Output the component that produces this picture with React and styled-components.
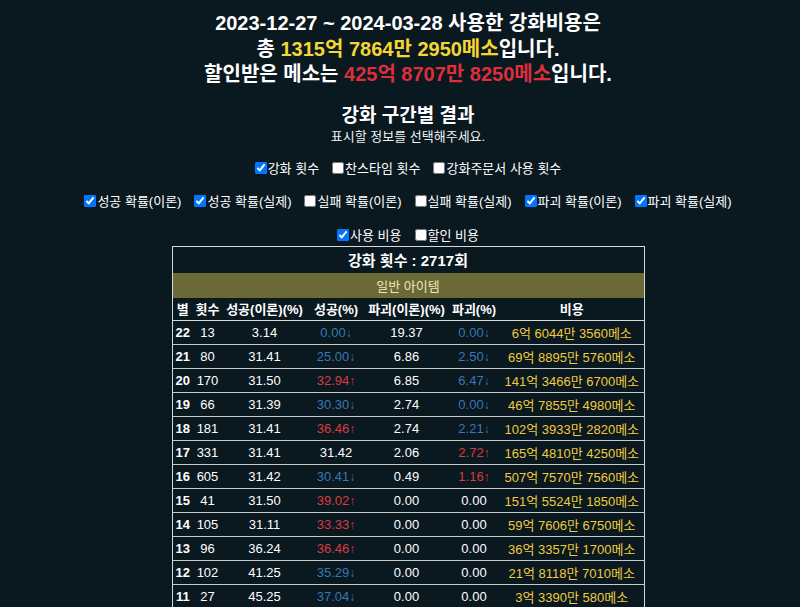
import React from "react";
import styled, { createGlobalStyle } from "styled-components";

const Global = createGlobalStyle`
  html, body { margin: 0; padding: 0; background: #0a1820; }
  body { font-family: "Liberation Sans", "Noto Sans CJK KR", sans-serif; color: #ffffff; }
`;

const Page = styled.div`
  padding: 11px 0 0 16px;
  display: flex;
  flex-direction: column;
  align-items: center;
`;

const Summary = styled.div`
  font-size: 20px;
  font-weight: bold;
  line-height: 25.5px;
  text-align: center;
`;

const Hl = styled.span`
  color: ${(p) => (p.$tone === "red" ? "#dc2f3a" : "#f3d633")};
`;

const Heading = styled.div`
  margin-top: 16px;
  font-size: 19px;
  font-weight: bold;
  line-height: 24px;
`;

const Sub = styled.div`
  font-size: 13px;
  line-height: 16px;
  color: #f2f2f2;
  margin-top: 1px;
`;

const OptionRow = styled.div`
  display: flex;
  gap: 13px;
  height: 20px;
  align-items: center;
  margin-top: ${(p) => p.$mt}px;
`;

const Option = styled.label`
  display: inline-flex;
  align-items: center;
  font-size: 13px;
  color: #ffffff;
  input {
    margin: 0 1px 0 0;
    width: 12px;
    height: 12px;
  }
`;

const Table = styled.table`
  margin-top: 1px;
  width: 473px;
  table-layout: fixed;
  border-collapse: collapse;
  border: 1px solid #d8d8d8;
  font-size: 13px;
`;

const TitleCell = styled.th`
  height: 26px;
  font-size: 15px;
  font-weight: bold;
  padding: 0;
  text-align: center;
`;

const GroupCell = styled.th`
  height: 25px;
  background: #6a6937;
  color: #efe7b8;
  font-size: 13px;
  font-weight: normal;
  padding: 0;
`;

const HeadRow = styled.tr`
  border-bottom: 1px solid #d8d8d8;
`;

const HeadCell = styled.th`
  height: 22px;
  font-size: 13px;
  font-weight: bold;
  padding: 0;
  text-align: center;
  white-space: nowrap;
`;

const Row = styled.tr`
  border-bottom: 1px solid #c8c8c8;
`;

const toneColor = {
  blue: "#3a76b4",
  red: "#db3a3e",
  gold: "#f0cb3e",
  white: "#ffffff",
};

const Cell = styled.td`
  height: 23px;
  padding: 0;
  text-align: center;
  white-space: nowrap;
  color: ${(p) => toneColor[p.$tone || "white"]};
  font-weight: ${(p) => (p.$bold ? "bold" : "normal")};
`;

const Arrow = styled.span`
  font-size: 12px;
`;

const rows = [
  ["22", "13", "3.14", ["0.00", "d"], "19.37", ["0.00", "d"], "6억 6044만 3560메소"],
  ["21", "80", "31.41", ["25.00", "d"], "6.86", ["2.50", "d"], "69억 8895만 5760메소"],
  ["20", "170", "31.50", ["32.94", "u"], "6.85", ["6.47", "d"], "141억 3466만 6700메소"],
  ["19", "66", "31.39", ["30.30", "d"], "2.74", ["0.00", "d"], "46억 7855만 4980메소"],
  ["18", "181", "31.41", ["36.46", "u"], "2.74", ["2.21", "d"], "102억 3933만 2820메소"],
  ["17", "331", "31.41", ["31.42", ""], "2.06", ["2.72", "u"], "165억 4810만 4250메소"],
  ["16", "605", "31.42", ["30.41", "d"], "0.49", ["1.16", "u"], "507억 7570만 7560메소"],
  ["15", "41", "31.50", ["39.02", "u"], "0.00", ["0.00", ""], "151억 5524만 1850메소"],
  ["14", "105", "31.11", ["33.33", "u"], "0.00", ["0.00", ""], "59억 7606만 6750메소"],
  ["13", "96", "36.24", ["36.46", "u"], "0.00", ["0.00", ""], "36억 3357만 1700메소"],
  ["12", "102", "41.25", ["35.29", "d"], "0.00", ["0.00", ""], "21억 8118만 7010메소"],
  ["11", "27", "45.25", ["37.04", "d"], "0.00", ["0.00", ""], "3억 3390만 580메소"],
];

function Trend({ v }) {
  const [val, dir] = v;
  const tone = dir === "d" ? "blue" : dir === "u" ? "red" : "white";
  return (
    <Cell $tone={tone}>
      {val}
      {dir && <Arrow>{dir === "d" ? "↓" : "↑"}</Arrow>}
    </Cell>
  );
}

function Opt({ checked, children }) {
  return (
    <Option>
      <input type="checkbox" defaultChecked={checked} />
      {children}
    </Option>
  );
}

export default function App() {
  return (
    <>
      <Global />
      <Page>
        <Summary>
          <div>2023-12-27 ~ 2024-03-28 사용한 강화비용은</div>
          <div>
            총 <Hl>1315억 7864만 2950메소</Hl>입니다.
          </div>
          <div>
            할인받은 메소는 <Hl $tone="red">425억 8707만 8250메소</Hl>입니다.
          </div>
        </Summary>
        <Heading>강화 구간별 결과</Heading>
        <Sub>표시할 정보를 선택해주세요.</Sub>
        <OptionRow $mt={13}>
          <Opt checked>강화 횟수</Opt>
          <Opt>찬스타임 횟수</Opt>
          <Opt>강화주문서 사용 횟수</Opt>
        </OptionRow>
        <OptionRow $mt={13}>
          <Opt checked>성공 확률(이론)</Opt>
          <Opt checked>성공 확률(실제)</Opt>
          <Opt>실패 확률(이론)</Opt>
          <Opt>실패 확률(실제)</Opt>
          <Opt checked>파괴 확률(이론)</Opt>
          <Opt checked>파괴 확률(실제)</Opt>
        </OptionRow>
        <OptionRow $mt={14}>
          <Opt checked>사용 비용</Opt>
          <Opt>할인 비용</Opt>
        </OptionRow>
        <Table>
          <colgroup>
            <col style={{ width: 21 }} />
            <col style={{ width: 29 }} />
            <col style={{ width: 85 }} />
            <col style={{ width: 58 }} />
            <col style={{ width: 83 }} />
            <col style={{ width: 52 }} />
            <col />
          </colgroup>
          <thead>
            <tr>
              <TitleCell colSpan={7}>강화 횟수 : 2717회</TitleCell>
            </tr>
            <tr>
              <GroupCell colSpan={7}>일반 아이템</GroupCell>
            </tr>
            <HeadRow>
              <HeadCell>별</HeadCell>
              <HeadCell>횟수</HeadCell>
              <HeadCell>성공(이론)(%)</HeadCell>
              <HeadCell>성공(%)</HeadCell>
              <HeadCell>파괴(이론)(%)</HeadCell>
              <HeadCell>파괴(%)</HeadCell>
              <HeadCell>비용</HeadCell>
            </HeadRow>
          </thead>
          <tbody>
            {rows.map((r) => (
              <Row key={r[0]}>
                <Cell $bold>{r[0]}</Cell>
                <Cell>{r[1]}</Cell>
                <Cell>{r[2]}</Cell>
                <Trend v={r[3]} />
                <Cell>{r[4]}</Cell>
                <Trend v={r[5]} />
                <Cell $tone="gold">{r[6]}</Cell>
              </Row>
            ))}
          </tbody>
        </Table>
      </Page>
    </>
  );
}
